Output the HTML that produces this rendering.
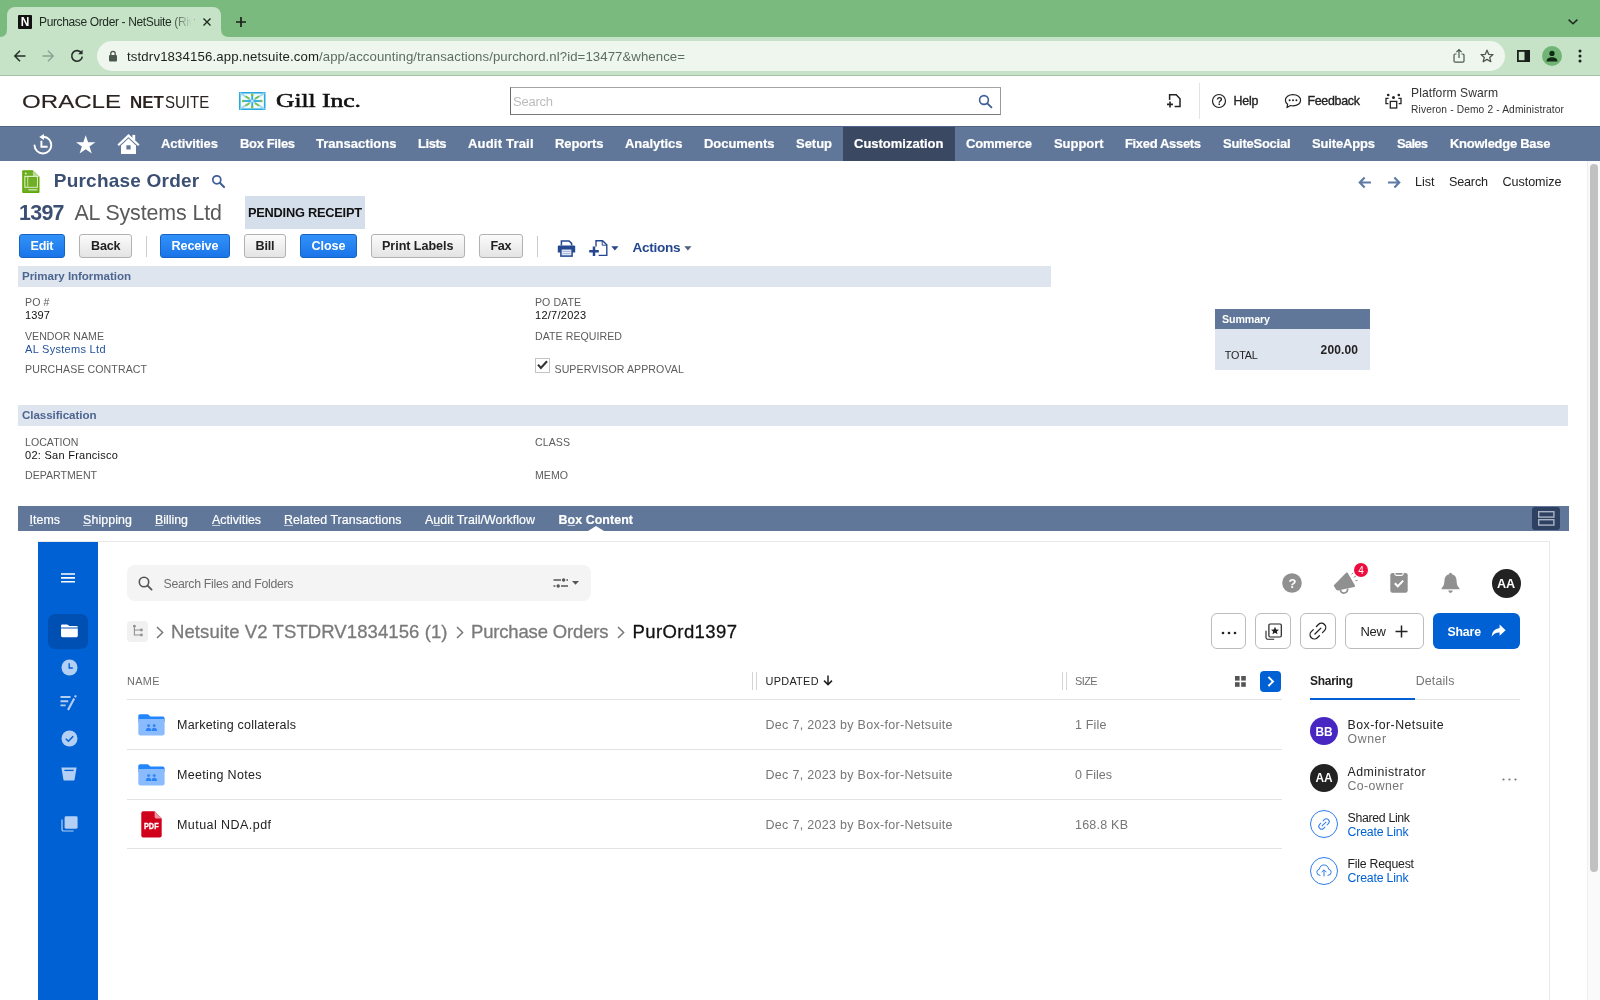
<!DOCTYPE html>
<html lang="en">
<head>
<meta charset="utf-8">
<title>Purchase Order - NetSuite (Riveron - Demo 2)</title>
<style>
*{box-sizing:border-box;margin:0;padding:0}
html,body{width:1600px;height:1000px;overflow:hidden;background:#fff}
body{position:relative;font-family:"Liberation Sans",sans-serif;font-size:12px;color:#222}
#root{position:absolute;left:0;top:0;width:1600px;height:1000px;will-change:transform}
.a{position:absolute;white-space:nowrap;line-height:1}
svg{position:absolute;overflow:visible}
#tabbar{left:0;top:0;width:1600px;height:37px;background:#7aba7e}
#tab{left:7px;top:7px;width:214px;height:30px;background:#c6e2c7;border-radius:8px 8px 0 0}
#toolbar{left:0;top:37px;width:1600px;height:39px;background:#c6e2c7;border-bottom:1px solid #a9bfaa}
#omni{left:97px;top:41px;width:1408px;height:30px;border-radius:15px;background:#eef6ee}
#nav{left:0;top:126px;width:1600px;height:35px;background:#607799}
#navsel{left:843px;top:126px;width:111.5px;height:35px;background:#3a4861}
.btn{top:234px;height:24px;border:1px solid #b2b2b2;border-radius:3px;background:linear-gradient(#fbfbfb,#e4e4e4)}
.btn.b{background:linear-gradient(#3292f8,#1a74e9);border-color:#1763c4}
.sec{height:21px;background:#dfe5ef}
.row{left:127px;width:1155px;height:1px;background:#e3e3e3}
.ib{top:613px;height:36px;border:1px solid #bcbcbc;border-radius:6px;background:#fff}
u{text-decoration-thickness:1px;text-underline-offset:0.5px;text-decoration-color:rgba(255,255,255,.65)}
</style>
</head>
<body>
<div id="root">
<!-- BROWSER CHROME -->
<div class="a" id="tabbar"></div>
<div class="a" id="tab"></div>
<svg style="left:0;top:29px" width="230" height="8"><path d="M0 8 Q7 8 7 0 L7 8Z M221 0 Q221 8 229 8 L221 8Z" fill="#c6e2c7"/></svg>
<div class="a" id="toolbar"></div>
<div class="a" id="omni"></div>
<div class="a" style="left:18px;top:15px;width:14px;height:14px;background:#111;border-radius:1px"></div>
<div class="a" style="left:170px;top:12px;width:24px;height:20px;background:linear-gradient(90deg,rgba(198,226,199,0),#c6e2c7 90%);z-index:3"></div>
<svg style="left:202px;top:17px" width="10" height="10"><path d="M1.5 1.5 L8.5 8.5 M8.5 1.5 L1.5 8.5" stroke="#1f2a20" stroke-width="1.4" fill="none"/></svg>
<svg style="left:235px;top:16px" width="12" height="12"><path d="M6 1 V11 M1 6 H11" stroke="#1a1f1a" stroke-width="1.7" fill="none"/></svg>
<svg style="left:1566px;top:18px" width="14" height="8"><path d="M2.6 1.6 L7 5.8 L11.4 1.6" stroke="#1f2a20" stroke-width="1.5" fill="none"/></svg>
<svg style="left:13px;top:49px" width="14" height="14"><path d="M12.5 7 H2 M7 1.8 L1.8 7 L7 12.2" stroke="#27302a" stroke-width="1.5" fill="none"/></svg>
<svg style="left:41px;top:49px" width="14" height="14"><path d="M1.5 7 H12 M7 1.8 L12.2 7 L7 12.2" stroke="#8ea392" stroke-width="1.5" fill="none"/></svg>
<svg style="left:69px;top:48px" width="16" height="16"><path d="M12.6 5.2 A5.3 5.3 0 1 0 13.3 8.6" stroke="#27302a" stroke-width="1.6" fill="none"/><path d="M13.6 1.8 V6.3 H9.1 Z" fill="#27302a"/></svg>
<svg style="left:108px;top:50px" width="10" height="12"><rect x="1" y="5" width="8" height="6.5" rx="1" fill="#4c584e"/><path d="M2.8 5.5 V3.6 A2.2 2.2 0 0 1 7.2 3.6 V5.5" stroke="#4c584e" stroke-width="1.3" fill="none"/></svg>
<svg style="left:1452px;top:48px" width="14" height="16"><path d="M4.5 6 H3.2 A1.2 1.2 0 0 0 2 7.2 V13 A1.2 1.2 0 0 0 3.2 14.2 H10.8 A1.2 1.2 0 0 0 12 13 V7.2 A1.2 1.2 0 0 0 10.8 6 H9.5 M7 10 V1.8 M4.4 4.2 L7 1.6 L9.6 4.2" stroke="#4c584e" stroke-width="1.2" fill="none"/></svg>
<svg style="left:1480px;top:49px" width="14" height="14"><path d="M7 1.2 L8.7 5.3 L13 5.6 L9.7 8.4 L10.8 12.7 L7 10.4 L3.2 12.7 L4.3 8.4 L1 5.6 L5.3 5.3 Z" stroke="#4c584e" stroke-width="1.3" fill="none" stroke-linejoin="round"/></svg>
<svg style="left:1517px;top:50px" width="13" height="12"><rect x="0.9" y="0.9" width="11.2" height="10.2" stroke="#1a1f1a" stroke-width="1.8" fill="none"/><rect x="7.5" y="1" width="4.6" height="10" fill="#1a1f1a"/></svg>
<div class="a" style="left:1542px;top:46px;width:20px;height:20px;border-radius:10px;background:#72b478"></div>
<svg style="left:1545px;top:49px" width="14" height="14"><circle cx="7" cy="4.4" r="2.6" fill="#0f2a14"/><path d="M1.5 12.6 C1.5 9.2 4.2 8.2 7 8.2 C9.8 8.2 12.5 9.2 12.5 12.6 Z" fill="#0f2a14"/></svg>
<svg style="left:1578px;top:49px" width="4" height="14"><circle cx="2" cy="2" r="1.5" fill="#1a1f1a"/><circle cx="2" cy="7" r="1.5" fill="#1a1f1a"/><circle cx="2" cy="12" r="1.5" fill="#1a1f1a"/></svg>
<!-- NETSUITE HEADER -->
<div class="a" id="nav"></div>
<div class="a" id="navsel"></div>
<svg style="left:238.7px;top:92px" width="26.5" height="18" viewBox="0 0 26.5 18"><rect x="0.8" y="0.8" width="24.9" height="16.4" fill="#f3fafd" stroke="#29a9e0" stroke-width="1.6"/><path d="M1 1 L25.5 17 M25.5 1 L1 17" stroke="#9bd4ef" stroke-width="1.6"/><path d="M4 9 H22.5" stroke="#29a9e0" stroke-width="1.8"/><path d="M13.2 2.6 V15.4" stroke="#29a9e0" stroke-width="1.8"/><circle cx="13.2" cy="9" r="1.5" fill="#bfe4f6"/><path d="M6.5 4.2 L10.5 6.8 M20 4.2 L16 6.8 M6.5 13.8 L10.5 11.2 M20 13.8 L16 11.2" stroke="#7ac143" stroke-width="1.7"/><circle cx="13.2" cy="2.9" r="1.3" fill="#7ac143"/><circle cx="13.2" cy="15.1" r="1.3" fill="#7ac143"/><circle cx="4.2" cy="9" r="1.3" fill="#7ac143"/><circle cx="22.3" cy="9" r="1.3" fill="#7ac143"/></svg>
<div class="a" style="left:510px;top:87px;width:491px;height:28px;border:1px solid #6a6a6a;border-top-color:#a4a4a4;border-right-color:#9a9a9a;border-bottom-color:#7a7a7a;background:#fff"></div>
<svg style="left:978px;top:94px" width="15" height="15" viewBox="0 0 15 15"><circle cx="6" cy="6" r="4.4" stroke="#3e5f9a" stroke-width="1.6" fill="none"/><path d="M9.3 9.3 L13.4 13.4" stroke="#3e5f9a" stroke-width="1.9" stroke-linecap="round"/></svg>

<svg style="left:1166px;top:93px" width="16" height="16" viewBox="0 0 16 16"><path d="M3.6 7 V1.8 H10.2 L14 5.8 V13.6 H8.6" stroke="#222" stroke-width="1.5" fill="none"/><path d="M1 11.4 H7 M4 8.4 V14.4" stroke="#222" stroke-width="1.6" fill="none"/></svg>
<div class="a" style="left:1199px;top:83px;width:1px;height:36px;background:#e3e3e3"></div>
<svg style="left:1211px;top:93px" width="16" height="16" viewBox="0 0 16 16"><circle cx="8" cy="8" r="6.5" stroke="#222" stroke-width="1.2" fill="none"/></svg>
<svg style="left:1284px;top:93px" width="18" height="16" viewBox="0 0 18 16"><path d="M9 1.6 C13.4 1.6 16.6 4 16.6 7.2 C16.6 10.4 13.4 12.8 9 12.8 C8.1 12.8 7.2 12.7 6.4 12.5 L3 14.6 L3.6 11.3 C2.2 10.3 1.4 8.8 1.4 7.2 C1.4 4 4.6 1.6 9 1.6 Z" stroke="#222" stroke-width="1.2" fill="none" stroke-linejoin="round"/><circle cx="5.6" cy="7.3" r="1" fill="#222"/><circle cx="9" cy="7.3" r="1" fill="#222"/><circle cx="12.4" cy="7.3" r="1" fill="#222"/></svg>
<svg style="left:1384px;top:92px" width="19" height="18" viewBox="0 0 19 18"><rect x="6.3" y="9.4" width="6.4" height="6.6" stroke="#222" stroke-width="1.3" fill="none"/><circle cx="9.5" cy="5.4" r="1.5" fill="#222"/><circle cx="4.2" cy="3" r="1.3" fill="#222"/><circle cx="14.8" cy="3" r="1.3" fill="#222"/><path d="M4.6 6.4 H2 V11.6 H4.4 M14.4 6.4 H17 V11.6 H14.6" stroke="#222" stroke-width="1.3" fill="none"/></svg>

<div class="a" style="left:0;top:126px;width:1600px;height:1px;background:#4f6486"></div>
<svg style="left:32px;top:132.5px" width="24" height="24" viewBox="0 0 24 24"><path d="M11.4 3.7 A8.4 8.4 0 1 1 2.5 12.4" stroke="#fff" stroke-width="1.9" fill="none" stroke-linecap="round"/><path d="M7.2 3.9 L12 1 V6.9 Z" fill="#fff"/><path d="M9.4 7.8 V13.7 H15.6" stroke="#fff" stroke-width="1.9" fill="none"/></svg>
<svg style="left:75px;top:133.5px" width="22" height="21" viewBox="0 0 22 21"><path d="M10.7 1.2 L13.1 8.2 L20.4 8.2 L14.5 12.5 L16.8 19.6 L10.7 15.3 L4.6 19.6 L6.9 12.5 L1 8.2 L8.3 8.2 Z" fill="#fff"/></svg>
<svg style="left:117px;top:133.5px" width="23" height="21" viewBox="0 0 23 21"><path d="M1.2 11.2 L11.5 1.6 L21.8 11.2" stroke="#fff" stroke-width="2.2" fill="none" stroke-linejoin="miter"/><path d="M4 11.4 L11.5 4.6 L19 11.4 V20 H4 Z" fill="#fff"/><rect x="15.4" y="0.9" width="2.8" height="5" fill="#fff"/><rect x="9.4" y="11.3" width="4.2" height="4.2" fill="#607799"/></svg>
<!--NAVICONS-->
<!-- PAGE -->
<svg style="left:22.3px;top:169.7px" width="17.7" height="23.3" viewBox="0 0 17.7 23.3"><path d="M1.2 0.3 H10.8 L17.5 6.8 V22 Q17.5 23.1 16.4 23.1 H1.2 Q0.2 23.1 0.2 22 V1.3 Q0.2 0.3 1.2 0.3Z" fill="#5ea900"/><path d="M1.5 1.6 H10.4 L16.2 7.4 V21.8 H1.5Z" fill="#70ad28"/><path d="M10.9 0.4 L17.5 6.9 H12 Q10.9 6.9 10.9 5.8Z" fill="#b9db94"/><rect x="2.9" y="6.4" width="12.5" height="10.8" fill="#5ea900" stroke="#e2f1cf" stroke-width="1.1"/><rect x="6.6" y="7.3" width="7.6" height="9" fill="#70ad28"/><rect x="4.9" y="7" width="1.5" height="9.6" fill="#b4d78c"/><path d="M6.5 19.8 H15.3" stroke="#dcefc8" stroke-width="1.1"/><rect x="2.9" y="2.7" width="1.6" height="1.6" fill="#eaf5dc"/></svg>
<svg style="left:211px;top:174px" width="15" height="15" viewBox="0 0 15 15"><circle cx="5.8" cy="5.8" r="4" stroke="#3e5f9a" stroke-width="1.7" fill="none"/><path d="M9 9 L13 13" stroke="#3e5f9a" stroke-width="2.2" stroke-linecap="round"/></svg>
<div class="a" style="left:245px;top:196px;width:120px;height:33px;background:#d5dfec"></div>
<div class="a btn b" style="left:19px;width:46px"></div>
<div class="a btn" style="left:79px;width:53px"></div>
<div class="a" style="left:146px;top:236px;width:1px;height:21px;background:#ccc"></div>
<div class="a btn b" style="left:160px;width:70px"></div>
<div class="a btn" style="left:244px;width:42px"></div>
<div class="a btn b" style="left:300px;width:57px"></div>
<div class="a btn" style="left:370.5px;width:94.5px"></div>
<div class="a btn" style="left:479px;width:44px"></div>
<div class="a" style="left:537px;top:236px;width:1px;height:21px;background:#ccc"></div>
<svg style="left:557px;top:240px" width="19" height="17" viewBox="0 0 19 17"><path d="M4.4 5.6 V1 H12 L14.6 3.4 V5.6" stroke="#24478f" stroke-width="1.5" fill="#fff"/><path d="M0.8 6.6 Q0.8 5.4 2 5.4 H17 Q18.2 5.4 18.2 6.6 V12.4 H0.8Z" fill="#24478f"/><rect x="3.9" y="8.8" width="11.2" height="7.3" fill="#e6ebf6" stroke="#24478f" stroke-width="1.5"/><path d="M5.4 11.4 H13.6 M5.4 13.6 H13.6" stroke="#9fb0d6" stroke-width="0.9"/></svg>
<svg style="left:589px;top:239px" width="19" height="18" viewBox="0 0 19 18"><path d="M7 7.4 V1.8 H13.6 L17.8 5.8 V16.4 H9.6" stroke="#24478f" stroke-width="1.4" fill="none"/><path d="M13.2 2 V6.2 H17.6" stroke="#24478f" stroke-width="1" fill="none"/><path d="M0.2 12.2 H9.8 M5 7.4 V17" stroke="#24478f" stroke-width="2.5" fill="none"/></svg>
<svg style="left:611px;top:246px" width="8" height="5"><path d="M0.3 0.3 H7.5 L3.9 4.6Z" fill="#24478f"/></svg>
<svg style="left:684px;top:246px" width="8" height="5"><path d="M0.3 0.3 H7.5 L3.9 4.6Z" fill="#4f5f80"/></svg>
<div class="a sec" style="left:18px;top:266px;width:1033px"></div>
<div class="a sec" style="left:18px;top:405px;width:1550px"></div>
<div class="a" style="left:535px;top:358px;width:15px;height:15px;border:1px solid #c4c4c4;background:#fff"></div>
<svg style="left:537px;top:360px" width="11" height="10" viewBox="0 0 11 10"><path d="M1 4.6 L3.9 8 L10 1.2" stroke="#333" stroke-width="2.1" fill="none"/></svg>
<div class="a" style="left:1215px;top:309px;width:155px;height:20px;background:#607799"></div>
<div class="a" style="left:1215px;top:329px;width:155px;height:41px;background:#dfe5ef"></div>
<svg style="left:1357.5px;top:175.5px" width="14" height="13" viewBox="0 0 14 13"><path d="M13 6.5 H2.4 M6.6 1.6 L1.8 6.5 L6.6 11.4" stroke="#5f7ba5" stroke-width="2.2" fill="none"/></svg>
<svg style="left:1386.5px;top:175.5px" width="14" height="13" viewBox="0 0 14 13"><path d="M1 6.5 H11.6 M7.4 1.6 L12.2 6.5 L7.4 11.4" stroke="#5f7ba5" stroke-width="2.2" fill="none"/></svg>
<div class="a" style="left:18px;top:506px;width:1550.7px;height:25px;background:#607799"></div>
<svg style="left:588px;top:526px" width="16" height="5"><path d="M0 5 L8 0 L16 5Z" fill="#fff"/></svg>
<div class="a" style="left:1532px;top:507px;width:28px;height:23px;background:#2f4162;border-radius:3px"></div>
<svg style="left:1538px;top:511px" width="17" height="15" viewBox="0 0 17 15"><rect x="0.7" y="0.7" width="15.2" height="5.4" stroke="#aab3c2" stroke-width="1.4" fill="none"/><rect x="0.7" y="8.7" width="15.2" height="5.4" stroke="#aab3c2" stroke-width="1.4" fill="none"/></svg>
<div class="a" style="left:1587px;top:161px;width:13px;height:839px;background:#fafafa;border-left:1px solid #efefef"></div>
<div class="a" style="left:1590px;top:164px;width:7.5px;height:708px;background:#c1c1c1;border-radius:4px"></div>

<!-- BOX -->
<div class="a" style="left:38px;top:541px;width:1512px;height:470px;border:1px solid #e8e8e8;background:#fff"></div>
<div class="a" style="left:38px;top:542px;width:60px;height:458px;background:#0061d5"></div>
<svg style="left:61px;top:573px" width="14" height="10"><path d="M0 1 H14 M0 4.9 H14 M0 8.8 H14" stroke="#fff" stroke-width="1.6"/></svg>
<div class="a" style="left:48px;top:613.5px;width:39.5px;height:35.5px;border-radius:7px;background:#0050b3"></div>
<svg style="left:60.5px;top:623.5px" width="17" height="13.5" viewBox="0 0 17 13.5"><path d="M0 1.6 Q0 0.4 1.2 0.4 H6 Q6.8 0.4 7.3 1 L8 1.9 H15.6 Q16.8 1.9 16.8 3.1 V3.6 H0Z" fill="#fff"/><path d="M0 4.6 H16.8 V11.8 Q16.8 13.2 15.4 13.2 H1.4 Q0 13.2 0 11.8Z" fill="#fff"/></svg>
<svg style="left:60.5px;top:658.5px" width="17" height="17" viewBox="0 0 17 17"><circle cx="8.5" cy="8.5" r="8" fill="#b3cff3"/><path d="M8.2 4.2 V9 H11.8" stroke="#0061d5" stroke-width="1.4" fill="none"/></svg>
<svg style="left:60px;top:694px" width="18" height="17" viewBox="0 0 18 17"><path d="M0.5 3 H10.5 M0.5 7.2 H8.2 M0.5 11.4 H5.6" stroke="#b3cff3" stroke-width="1.9"/><path d="M8 16 L14.2 4.6" stroke="#b3cff3" stroke-width="2.1"/><path d="M15 3.2 L15.9 1.4" stroke="#b3cff3" stroke-width="2.1"/></svg>
<svg style="left:60.5px;top:730px" width="17" height="17" viewBox="0 0 17 17"><circle cx="8.5" cy="8.5" r="8" fill="#b3cff3"/><path d="M4.8 8.8 L7.4 11.2 L12.2 6.2" stroke="#0061d5" stroke-width="1.5" fill="none"/></svg>
<svg style="left:61px;top:767px" width="16" height="14" viewBox="0 0 16 14"><path d="M0.4 0.4 H15.6 L13.6 12.4 Q13.4 13.6 12.2 13.6 H3.8 Q2.6 13.6 2.4 12.4Z" fill="#b3cff3"/><path d="M3.4 3.4 H12.6" stroke="#0061d5" stroke-width="1.3"/></svg>
<svg style="left:60.5px;top:816px" width="17" height="16" viewBox="0 0 17 16"><rect x="3.6" y="0.3" width="13" height="12.4" rx="1.4" fill="#b3cff3"/><path d="M1 3.6 V13.4 Q1 15 2.6 15 H12.6" stroke="#b3cff3" stroke-width="1.2" fill="none"/></svg>
<div class="a" style="left:127px;top:565px;width:464px;height:36px;border-radius:8px;background:#f4f4f4"></div>
<svg style="left:138px;top:576px" width="15" height="15" viewBox="0 0 15 15"><circle cx="6" cy="6" r="4.7" stroke="#555" stroke-width="1.6" fill="none"/><path d="M9.6 9.6 L13.6 13.6" stroke="#555" stroke-width="1.8" stroke-linecap="round"/></svg>
<svg style="left:553px;top:577px" width="16" height="12" viewBox="0 0 16 12"><path d="M0.5 3 H8 M13.4 3 H15 M0.5 9 H2.4 M8 9 H15" stroke="#555" stroke-width="1.5"/><circle cx="10.6" cy="3" r="1.7" fill="#555"/><circle cx="5.2" cy="9" r="1.7" fill="#555"/></svg>
<svg style="left:572px;top:581px" width="7" height="4"><path d="M0 0 H7 L3.5 3.8Z" fill="#555"/></svg>
<!-- box top icons -->
<svg style="left:1282px;top:573px" width="20" height="20" viewBox="0 0 20 20"><circle cx="10" cy="10" r="9.8" fill="#909090"/></svg>
<svg style="left:1332px;top:571px" width="28" height="24" viewBox="0 0 28 24"><path d="M1.6 14.6 L14.4 1.6 Q15.2 1 15.8 2 L23 14.4 Q23.4 15.6 22.2 16 L6 19.4 Q4.6 19.6 4 18.6 Z" fill="#909090"/><path d="M8.4 19 Q8.8 22.4 12.4 22 Q15.8 21.4 15.6 17.6" stroke="#909090" stroke-width="1.7" fill="none"/><path d="M19.6 3.4 L21.2 1.8 M21.8 6.4 L24 5 M23.4 9.8 L25.6 9.4" stroke="#909090" stroke-width="1"/></svg>
<div class="a" style="left:1354px;top:562.5px;width:14px;height:14px;border-radius:7px;background:#ed0c3e"></div>
<svg style="left:1390px;top:572px" width="18" height="21" viewBox="0 0 18 21"><rect x="0.3" y="1" width="17.4" height="19.8" rx="2.2" fill="#909090"/><path d="M4.8 1 V1.6 Q4.8 3.4 6.6 3.4 H11.4 Q13.2 3.4 13.2 1.6 V1" stroke="#fff" stroke-width="1.2" fill="none"/><path d="M4.8 11.2 L7.8 14.2 L13.2 8.6" stroke="#fff" stroke-width="2" fill="none"/></svg>
<svg style="left:1441px;top:572px" width="19" height="22" viewBox="0 0 19 22"><path d="M9.5 0.8 Q10.8 0.8 10.9 2.2 Q15.6 3.4 15.6 9 Q15.6 14 18.4 16 V17.2 H0.6 V16 Q3.4 14 3.4 9 Q3.4 3.4 8.1 2.2 Q8.2 0.8 9.5 0.8Z" fill="#909090"/><path d="M7.2 18.6 H11.8 Q11.2 21 9.5 21 Q7.8 21 7.2 18.6Z" fill="#909090"/></svg>
<div class="a" style="left:1491.5px;top:568.5px;width:29px;height:29px;border-radius:15px;background:#222"></div>
<!-- breadcrumb -->
<div class="a" style="left:127px;top:620.5px;width:21px;height:21px;border-radius:4px;background:#f1f1f1"></div>
<svg style="left:132px;top:624px" width="12" height="14" viewBox="0 0 12 14"><path d="M2.4 3.2 V11 H8.6 M2.4 6 H8.6" stroke="#909090" stroke-width="1.1" fill="none"/><circle cx="2.4" cy="2.2" r="1.4" fill="#909090"/><circle cx="9.4" cy="6" r="1.4" fill="#909090"/><circle cx="9.4" cy="11" r="1.4" fill="#909090"/></svg>
<svg style="left:155.5px;top:626px" width="8" height="13"><path d="M1 1 L6.6 6.5 L1 12" stroke="#767676" stroke-width="1.5" fill="none"/></svg>
<svg style="left:456px;top:626px" width="8" height="13"><path d="M1 1 L6.6 6.5 L1 12" stroke="#767676" stroke-width="1.5" fill="none"/></svg>
<svg style="left:617px;top:626px" width="8" height="13"><path d="M1 1 L6.6 6.5 L1 12" stroke="#767676" stroke-width="1.5" fill="none"/></svg>
<!-- action buttons -->
<div class="a ib" style="left:1211px;width:35px"></div>
<svg style="left:1221px;top:631px" width="16" height="4"><circle cx="2" cy="2" r="1.3" fill="#222"/><circle cx="8" cy="2" r="1.3" fill="#222"/><circle cx="14" cy="2" r="1.3" fill="#222"/></svg>
<div class="a ib" style="left:1255px;width:36px"></div>
<svg style="left:1264.5px;top:622.5px" width="17" height="17" viewBox="0 0 17 17"><rect x="3.9" y="1" width="12.4" height="13" rx="1.2" stroke="#222" stroke-width="1.2" fill="none"/><path d="M1 7.8 V14.4 Q1 16.2 2.8 16.2 H9.2" stroke="#222" stroke-width="1.1" fill="none"/><path d="M10 3.8 L11.2 6.4 L14 6.7 L11.9 8.5 L12.5 11.3 L10 9.8 L7.5 11.3 L8.1 8.5 L6 6.7 L8.8 6.4Z" fill="#222"/></svg>
<div class="a ib" style="left:1300px;width:36px"></div>
<svg style="left:1300px;top:613px" width="36" height="36" viewBox="0 0 36 36"><g transform="translate(17.9,18.1) rotate(-45)" stroke="#222" stroke-width="1.3" fill="none" stroke-linecap="round"><path d="M2.2 -4.3 H5 A4.3 4.3 0 0 1 5 4.3 H2.2 M-2.2 4.3 H-5 A4.3 4.3 0 0 1 -5 -4.3 H-2.2 M-4.2 0 H4.2"/></g></svg>
<div class="a ib" style="left:1344.5px;width:79px"></div>
<svg style="left:1395px;top:625px" width="13" height="13"><path d="M6.5 0.5 V12.5 M0.5 6.5 H12.5" stroke="#222" stroke-width="1.5"/></svg>
<div class="a" style="left:1432.5px;top:613px;width:87.5px;height:36px;border-radius:6px;background:#0061d5"></div>
<svg style="left:1491px;top:624px" width="15" height="14" viewBox="0 0 15 14"><path d="M8.6 0.6 L14.6 6.2 L8.6 11.8 V8.4 Q3.4 8.2 0.6 12.8 Q1 5 8.6 4Z" fill="#fff"/></svg>
<!-- list header -->
<div class="a" style="left:752px;top:672px;width:1px;height:18px;background:#d4d4d4"></div>
<div class="a" style="left:755.5px;top:672px;width:1px;height:18px;background:#d4d4d4"></div>
<div class="a" style="left:1062px;top:672px;width:1px;height:18px;background:#d4d4d4"></div>
<div class="a" style="left:1065.5px;top:672px;width:1px;height:18px;background:#d4d4d4"></div>
<svg style="left:823px;top:675px" width="10" height="11"><path d="M5 0.5 V9.2 M1 5.6 L5 9.6 L9 5.6" stroke="#222" stroke-width="1.5" fill="none"/></svg>
<svg style="left:1234.5px;top:675.5px" width="11" height="11"><rect x="0" y="0" width="4.6" height="4.6" fill="#555"/><rect x="6.2" y="0" width="4.6" height="4.6" fill="#555"/><rect x="0" y="6.2" width="4.6" height="4.6" fill="#555"/><rect x="6.2" y="6.2" width="4.6" height="4.6" fill="#555"/></svg>
<div class="a" style="left:1260px;top:671px;width:21px;height:21px;border-radius:4px;background:#0061d5"></div>
<svg style="left:1267px;top:676px" width="8" height="11"><path d="M1.4 1 L6 5.5 L1.4 10" stroke="#fff" stroke-width="1.9" fill="none"/></svg>
<div class="a row" style="top:699px"></div>
<div class="a row" style="top:749px"></div>
<div class="a row" style="top:799px"></div>
<div class="a row" style="top:848px"></div>
<div class="a" style="left:1310px;top:699px;width:210px;height:1px;background:#e3e3e3"></div>
<div class="a" style="left:1310px;top:698px;width:105px;height:2px;background:#0061d5"></div>
<svg style="left:138.2px;top:713.5px" width="27" height="22" viewBox="0 0 27 22"><path d="M0.3 2 Q0.3 0.3 2 0.3 H9.2 Q10.2 0.3 10.9 1 L12.3 2.6 H24.8 Q26.6 2.6 26.6 4.4 V8 H0.3Z" fill="#2486fc"/><path d="M0.3 6 Q0.3 5 1.3 5 H25.6 Q26.6 5 26.6 6 V19.6 Q26.6 21.4 24.8 21.4 H2.1 Q0.3 21.4 0.3 19.6Z" fill="#8abbfd"/><circle cx="10.6" cy="11.6" r="1.45" fill="#2b83f6"/><circle cx="16.2" cy="11.6" r="1.45" fill="#2b83f6"/><path d="M7.8 17 Q7.8 13.8 10.6 13.8 Q13.2 13.8 13.2 17Z M13.6 17 Q13.6 13.8 16.2 13.8 Q19 13.8 19 17Z" fill="#2b83f6"/></svg>
<svg style="left:138.2px;top:763.5px" width="27" height="22" viewBox="0 0 27 22"><path d="M0.3 2 Q0.3 0.3 2 0.3 H9.2 Q10.2 0.3 10.9 1 L12.3 2.6 H24.8 Q26.6 2.6 26.6 4.4 V8 H0.3Z" fill="#2486fc"/><path d="M0.3 6 Q0.3 5 1.3 5 H25.6 Q26.6 5 26.6 6 V19.6 Q26.6 21.4 24.8 21.4 H2.1 Q0.3 21.4 0.3 19.6Z" fill="#8abbfd"/><circle cx="10.6" cy="11.6" r="1.45" fill="#2b83f6"/><circle cx="16.2" cy="11.6" r="1.45" fill="#2b83f6"/><path d="M7.8 17 Q7.8 13.8 10.6 13.8 Q13.2 13.8 13.2 17Z M13.6 17 Q13.6 13.8 16.2 13.8 Q19 13.8 19 17Z" fill="#2b83f6"/></svg>
<svg style="left:141px;top:810.5px" width="21" height="27" viewBox="0 0 21 27"><path d="M2.2 0.3 H13.6 L20.7 7.4 V24.6 Q20.7 26.6 18.7 26.6 H2.2 Q0.3 26.6 0.3 24.6 V2.2 Q0.3 0.3 2.2 0.3Z" fill="#d0021b"/><path d="M13.6 0.3 L20.7 7.4 H15.2 Q13.6 7.4 13.6 5.8Z" fill="#f0949f"/></svg>

<div class="a" style="left:1310px;top:717px;width:28px;height:28px;border-radius:14px;background:#4826c2"></div>
<div class="a" style="left:1310px;top:763.5px;width:28px;height:28px;border-radius:14px;background:#222"></div>
<div class="a" style="left:1310px;top:810px;width:28px;height:28px;border-radius:14px;border:1px solid #2f7de9;background:#fff"></div>
<div class="a" style="left:1310px;top:856.5px;width:28px;height:28px;border-radius:14px;border:1px solid #2f7de9;background:#fff"></div>
<svg style="left:1310px;top:810px" width="28" height="28" viewBox="0 0 28 28"><g transform="translate(14,14) rotate(-45) scale(0.66)" stroke="#2f7de9" stroke-width="1.5" fill="none" stroke-linecap="round"><path d="M2.2 -4.3 H5 A4.3 4.3 0 0 1 5 4.3 H2.2 M-2.2 4.3 H-5 A4.3 4.3 0 0 1 -5 -4.3 H-2.2 M-4.2 0 H4.2"/></g></svg>
<svg style="left:1316px;top:864px" width="16" height="13" viewBox="0 0 16 13"><path d="M4.4 11.4 Q0.8 11.4 0.8 8.2 Q0.8 5.6 3.4 5.2 Q4 1 8 1 Q12 1 12.6 5.2 Q15.2 5.6 15.2 8.2 Q15.2 11.4 11.6 11.4" stroke="#2f7de9" stroke-width="1" fill="none"/><path d="M8 12.4 V6 M5.6 8.2 L8 5.8 L10.4 8.2" stroke="#2f7de9" stroke-width="1" fill="none"/></svg>
<svg style="left:1502px;top:778px" width="15" height="3"><circle cx="1.5" cy="1.5" r="1.1" fill="#767676"/><circle cx="7.5" cy="1.5" r="1.1" fill="#767676"/><circle cx="13.5" cy="1.5" r="1.1" fill="#767676"/></svg>



<!-- TEXT -->
<span class="a" style="left:20.7px;top:17.01px;font-size:11.9px;color:#fff;font-weight:700;letter-spacing:0.006px;">N</span>
<span class="a" style="left:39px;top:16.01px;font-size:12px;color:#1f2a20;letter-spacing:-0.364px;">Purchase Order - NetSuite (Riv</span>
<span class="a" style="left:127px;top:50.02px;font-size:13.2px;color:#1b211c;letter-spacing:0.149px;">tstdrv1834156.app.netsuite.com</span>
<span class="a" style="left:319px;top:50.02px;font-size:13.2px;color:#5f6d61;letter-spacing:0.081px;">/app/accounting/transactions/purchord.nl?id=13477&amp;whence=</span>
<span class="a" style="left:21.5px;top:94.00px;font-size:17.6px;color:#2a2320;transform:scaleX(1.3696);transform-origin:0 0;-webkit-text-stroke:0.12px #2a2320;">ORACLE</span>
<span class="a" style="left:129.7px;top:94.00px;font-size:16.4px;color:#2a2320;font-weight:700;transform:scaleX(1.0336);transform-origin:0 0;">NET</span>
<span class="a" style="left:164.6px;top:94.00px;font-size:16.4px;color:#2a2320;transform:scaleX(0.9155);transform-origin:0 0;">SUITE</span>
<span class="a" style="left:276.4px;top:92.01px;font-size:18.5px;color:#111;font-family:'Liberation Serif',serif;transform:scaleX(1.3770);transform-origin:0 0;-webkit-text-stroke:0.55px #111;">Gill Inc.</span>
<span class="a" style="left:513px;top:95.00px;font-size:13px;color:#bcbcbc;letter-spacing:-0.241px;">Search</span>
<span class="a" style="left:1233.4px;top:95.00px;font-size:12.4px;color:#222;letter-spacing:-0.128px;-webkit-text-stroke:0.35px #222;">Help</span>
<span class="a" style="left:1307.4px;top:95.00px;font-size:12.4px;color:#222;letter-spacing:-0.275px;-webkit-text-stroke:0.35px #222;">Feedback</span>
<span class="a" style="left:1411px;top:87.02px;font-size:12.1px;color:#333;letter-spacing:0.076px;">Platform Swarm</span>
<span class="a" style="left:1411px;top:105.01px;font-size:10.2px;color:#333;letter-spacing:0.150px;">Riveron - Demo 2 - Administrator</span>
<span class="a" style="left:161px;top:137.01px;font-size:13px;color:#fff;font-weight:700;letter-spacing:-0.090px;-webkit-text-stroke:0.2px #fff;">Activities</span>
<span class="a" style="left:240px;top:137.01px;font-size:13px;color:#fff;font-weight:700;letter-spacing:-0.350px;-webkit-text-stroke:0.2px #fff;">Box Files</span>
<span class="a" style="left:316px;top:137.01px;font-size:13px;color:#fff;font-weight:700;letter-spacing:0.027px;-webkit-text-stroke:0.2px #fff;">Transactions</span>
<span class="a" style="left:418px;top:137.01px;font-size:13px;color:#fff;font-weight:700;letter-spacing:-0.461px;-webkit-text-stroke:0.2px #fff;">Lists</span>
<span class="a" style="left:468px;top:137.01px;font-size:13px;color:#fff;font-weight:700;letter-spacing:0.194px;-webkit-text-stroke:0.2px #fff;">Audit Trail</span>
<span class="a" style="left:555px;top:137.01px;font-size:13px;color:#fff;font-weight:700;letter-spacing:-0.104px;-webkit-text-stroke:0.2px #fff;">Reports</span>
<span class="a" style="left:625px;top:137.01px;font-size:13px;color:#fff;font-weight:700;letter-spacing:-0.039px;-webkit-text-stroke:0.2px #fff;">Analytics</span>
<span class="a" style="left:704px;top:137.01px;font-size:13px;color:#fff;font-weight:700;letter-spacing:-0.037px;-webkit-text-stroke:0.2px #fff;">Documents</span>
<span class="a" style="left:796px;top:137.01px;font-size:13px;color:#fff;font-weight:700;letter-spacing:-0.031px;-webkit-text-stroke:0.2px #fff;">Setup</span>
<span class="a" style="left:854px;top:137.01px;font-size:13px;color:#fff;font-weight:700;letter-spacing:-0.005px;-webkit-text-stroke:0.2px #fff;">Customization</span>
<span class="a" style="left:966px;top:137.01px;font-size:13px;color:#fff;font-weight:700;letter-spacing:-0.172px;-webkit-text-stroke:0.2px #fff;">Commerce</span>
<span class="a" style="left:1054px;top:137.01px;font-size:13px;color:#fff;font-weight:700;letter-spacing:-0.055px;-webkit-text-stroke:0.2px #fff;">Support</span>
<span class="a" style="left:1125px;top:137.01px;font-size:13px;color:#fff;font-weight:700;letter-spacing:-0.339px;-webkit-text-stroke:0.2px #fff;">Fixed Assets</span>
<span class="a" style="left:1223px;top:137.01px;font-size:13px;color:#fff;font-weight:700;letter-spacing:-0.258px;-webkit-text-stroke:0.2px #fff;">SuiteSocial</span>
<span class="a" style="left:1312px;top:137.01px;font-size:13px;color:#fff;font-weight:700;letter-spacing:-0.162px;-webkit-text-stroke:0.2px #fff;">SuiteApps</span>
<span class="a" style="left:1397px;top:137.01px;font-size:13px;color:#fff;font-weight:700;letter-spacing:-0.746px;-webkit-text-stroke:0.2px #fff;">Sales</span>
<span class="a" style="left:1450px;top:137.01px;font-size:13px;color:#fff;font-weight:700;letter-spacing:-0.272px;-webkit-text-stroke:0.2px #fff;">Knowledge Base</span>
<span class="a" style="left:1216.2px;top:96.01px;font-size:10.5px;color:#222;font-weight:700;">?</span>
<span class="a" style="left:53.8px;top:171.01px;font-size:19px;color:#3b4f72;font-weight:700;letter-spacing:0.217px;">Purchase Order</span>
<span class="a" style="left:19.1px;top:203.00px;font-size:21.4px;color:#3b4f72;font-weight:700;letter-spacing:-0.731px;">1397</span>
<span class="a" style="left:74.4px;top:203.00px;font-size:21.4px;color:#5a5a5a;letter-spacing:-0.109px;">AL Systems Ltd</span>
<span class="a" style="left:248px;top:207.01px;font-size:12.8px;color:#111;font-weight:700;letter-spacing:-0.238px;">PENDING RECEIPT</span>
<span class="a" style="left:30.5px;top:240.01px;font-size:12.6px;color:#fff;font-weight:700;letter-spacing:-0.266px;">Edit</span>
<span class="a" style="left:91px;top:240.01px;font-size:12.6px;color:#222;font-weight:700;letter-spacing:-0.203px;">Back</span>
<span class="a" style="left:171.5px;top:240.01px;font-size:12.6px;color:#fff;font-weight:700;letter-spacing:-0.104px;">Receive</span>
<span class="a" style="left:255.5px;top:240.01px;font-size:12.6px;color:#222;font-weight:700;letter-spacing:-0.198px;">Bill</span>
<span class="a" style="left:311.5px;top:240.01px;font-size:12.6px;color:#fff;font-weight:700;letter-spacing:-0.074px;">Close</span>
<span class="a" style="left:382px;top:240.01px;font-size:12.6px;color:#222;font-weight:700;letter-spacing:-0.054px;">Print Labels</span>
<span class="a" style="left:490.5px;top:240.01px;font-size:12.6px;color:#222;font-weight:700;letter-spacing:-0.352px;">Fax</span>
<span class="a" style="left:632.5px;top:241.01px;font-size:13.6px;color:#24478f;font-weight:700;letter-spacing:-0.310px;">Actions</span>
<span class="a" style="left:1415px;top:176.01px;font-size:12.6px;color:#222;letter-spacing:-0.036px;">List</span>
<span class="a" style="left:1449px;top:176.01px;font-size:12.6px;color:#222;letter-spacing:-0.181px;">Search</span>
<span class="a" style="left:1502.5px;top:176.01px;font-size:12.6px;color:#222;letter-spacing:-0.062px;">Customize</span>
<span class="a" style="left:22px;top:270.01px;font-size:11.6px;color:#4d6690;font-weight:700;letter-spacing:-0.065px;">Primary Information</span>
<span class="a" style="left:22px;top:409.00px;font-size:11.6px;color:#4d6690;font-weight:700;letter-spacing:-0.069px;">Classification</span>
<span class="a" style="left:25px;top:297.02px;font-size:10.6px;color:#5c5c5c;letter-spacing:0.115px;">PO #</span>
<span class="a" style="left:25px;top:310.01px;font-size:11px;color:#111;letter-spacing:0.172px;">1397</span>
<span class="a" style="left:25px;top:331.01px;font-size:10.6px;color:#5c5c5c;letter-spacing:0.013px;">VENDOR NAME</span>
<span class="a" style="left:25px;top:344.01px;font-size:11px;color:#24529c;letter-spacing:0.298px;">AL Systems Ltd</span>
<span class="a" style="left:25px;top:364.02px;font-size:10.6px;color:#5c5c5c;letter-spacing:0.083px;">PURCHASE CONTRACT</span>
<span class="a" style="left:535px;top:297.02px;font-size:10.6px;color:#5c5c5c;letter-spacing:0.047px;">PO DATE</span>
<span class="a" style="left:535px;top:310.01px;font-size:11px;color:#111;letter-spacing:0.258px;">12/7/2023</span>
<span class="a" style="left:535px;top:331.01px;font-size:10.6px;color:#5c5c5c;letter-spacing:0.056px;">DATE REQUIRED</span>
<span class="a" style="left:554.5px;top:364.02px;font-size:10.6px;color:#5c5c5c;letter-spacing:0.074px;">SUPERVISOR APPROVAL</span>
<span class="a" style="left:25px;top:437.01px;font-size:10.6px;color:#5c5c5c;letter-spacing:0.018px;">LOCATION</span>
<span class="a" style="left:25px;top:450.01px;font-size:11px;color:#111;letter-spacing:0.271px;">02: San Francisco</span>
<span class="a" style="left:25px;top:470.00px;font-size:10.6px;color:#5c5c5c;">DEPARTMENT</span>
<span class="a" style="left:535px;top:437.01px;font-size:10.6px;color:#5c5c5c;letter-spacing:0.062px;">CLASS</span>
<span class="a" style="left:535px;top:470.00px;font-size:10.6px;color:#5c5c5c;letter-spacing:0.010px;">MEMO</span>
<span class="a" style="left:1222px;top:314.00px;font-size:10.7px;color:#fff;font-weight:700;letter-spacing:-0.120px;">Summary</span>
<span class="a" style="left:1224.8px;top:350.01px;font-size:10.8px;color:#222;letter-spacing:-0.203px;">TOTAL</span>
<span class="a" style="left:1320.6px;top:344.00px;font-size:12px;color:#222;font-weight:700;letter-spacing:0.139px;">200.00</span>
<span class="a" style="left:29.5px;top:514.01px;font-size:12.4px;color:#fff;letter-spacing:0.047px;-webkit-text-stroke:0.2px #fff;"><u>I</u>tems</span>
<span class="a" style="left:83px;top:514.01px;font-size:12.4px;color:#fff;letter-spacing:0.109px;-webkit-text-stroke:0.2px #fff;"><u>S</u>hipping</span>
<span class="a" style="left:155px;top:514.01px;font-size:12.4px;color:#fff;letter-spacing:-0.010px;-webkit-text-stroke:0.2px #fff;"><u>B</u>illing</span>
<span class="a" style="left:212px;top:514.01px;font-size:12.4px;color:#fff;letter-spacing:0.012px;-webkit-text-stroke:0.2px #fff;"><u>A</u>ctivities</span>
<span class="a" style="left:284px;top:514.01px;font-size:12.4px;color:#fff;letter-spacing:0.058px;-webkit-text-stroke:0.2px #fff;"><u>R</u>elated Transactions</span>
<span class="a" style="left:425px;top:514.01px;font-size:12.4px;color:#fff;letter-spacing:0.038px;-webkit-text-stroke:0.2px #fff;">A<u>u</u>dit Trail/Workflow</span>
<span class="a" style="left:558.5px;top:514.01px;font-size:12.4px;color:#fff;font-weight:700;letter-spacing:0.083px;-webkit-text-stroke:0.2px #fff;">B<u>o</u>x Content</span>
<span class="a" style="left:163.5px;top:578.02px;font-size:12.3px;color:#6f6f6f;letter-spacing:-0.291px;">Search Files and Folders</span>
<span class="a" style="left:1288.6px;top:577.00px;font-size:13px;color:#fff;font-weight:700;">?</span>
<span class="a" style="left:1358.2px;top:566.01px;font-size:10px;color:#fff;">4</span>
<span class="a" style="left:1497px;top:578.01px;font-size:12.6px;color:#fff;font-weight:700;letter-spacing:-0.203px;">AA</span>
<span class="a" style="left:171px;top:623.01px;font-size:18.5px;color:#7a7a7a;letter-spacing:0.093px;-webkit-text-stroke:0.3px #7a7a7a;">Netsuite V2 TSTDRV1834156 (1)</span>
<span class="a" style="left:471px;top:623.01px;font-size:18.5px;color:#7a7a7a;letter-spacing:-0.167px;-webkit-text-stroke:0.3px #7a7a7a;">Purchase Orders</span>
<span class="a" style="left:632.5px;top:623.01px;font-size:18.5px;color:#111;letter-spacing:0.411px;-webkit-text-stroke:0.3px #111;">PurOrd1397</span>
<span class="a" style="left:1360.4px;top:625.00px;font-size:13px;color:#222;letter-spacing:-0.208px;">New</span>
<span class="a" style="left:1447.5px;top:626.02px;font-size:12.3px;color:#fff;font-weight:700;letter-spacing:-0.172px;">Share</span>
<span class="a" style="left:127px;top:676.01px;font-size:10.9px;color:#6f6f6f;letter-spacing:0.344px;">NAME</span>
<span class="a" style="left:765.5px;top:676.01px;font-size:10.9px;color:#222;letter-spacing:0.294px;">UPDATED</span>
<span class="a" style="left:1075px;top:676.01px;font-size:10.9px;color:#6f6f6f;letter-spacing:-0.573px;">SIZE</span>
<span class="a" style="left:1310px;top:675.00px;font-size:12px;color:#222;font-weight:700;letter-spacing:-0.279px;">Sharing</span>
<span class="a" style="left:1415.7px;top:675.00px;font-size:12.4px;color:#767676;letter-spacing:0.138px;">Details</span>
<span class="a" style="left:177px;top:719.01px;font-size:12.5px;color:#222;letter-spacing:0.218px;">Marketing collaterals</span>
<span class="a" style="left:765.5px;top:719.01px;font-size:12.5px;color:#767676;letter-spacing:0.304px;">Dec 7, 2023 by Box-for-Netsuite</span>
<span class="a" style="left:1075px;top:719.01px;font-size:12.5px;color:#767676;letter-spacing:0.184px;">1 File</span>
<span class="a" style="left:177px;top:769.01px;font-size:12.5px;color:#222;letter-spacing:0.324px;">Meeting Notes</span>
<span class="a" style="left:765.5px;top:769.01px;font-size:12.5px;color:#767676;letter-spacing:0.304px;">Dec 7, 2023 by Box-for-Netsuite</span>
<span class="a" style="left:1075px;top:769.01px;font-size:12.5px;color:#767676;letter-spacing:0.029px;">0 Files</span>
<span class="a" style="left:177px;top:819.01px;font-size:12.5px;color:#222;letter-spacing:0.444px;">Mutual NDA.pdf</span>
<span class="a" style="left:765.5px;top:819.01px;font-size:12.5px;color:#767676;letter-spacing:0.304px;">Dec 7, 2023 by Box-for-Netsuite</span>
<span class="a" style="left:1075px;top:819.01px;font-size:12.5px;color:#767676;letter-spacing:0.223px;">168.8 KB</span>
<span class="a" style="left:1315.5px;top:727.01px;font-size:11.9px;color:#fff;font-weight:700;letter-spacing:-0.188px;">BB</span>
<span class="a" style="left:1315.5px;top:773.01px;font-size:11.9px;color:#fff;font-weight:700;letter-spacing:-0.188px;">AA</span>
<span class="a" style="left:1347.6px;top:719.02px;font-size:12.3px;color:#222;letter-spacing:0.477px;">Box-for-Netsuite</span>
<span class="a" style="left:1347.6px;top:733.02px;font-size:12.3px;color:#767676;letter-spacing:0.545px;">Owner</span>
<span class="a" style="left:1347.6px;top:766.01px;font-size:12.3px;color:#222;letter-spacing:0.464px;">Administrator</span>
<span class="a" style="left:1347.6px;top:780.01px;font-size:12.3px;color:#767676;letter-spacing:0.384px;">Co-owner</span>
<span class="a" style="left:1347.6px;top:812.01px;font-size:12.3px;color:#222;letter-spacing:-0.324px;">Shared Link</span>
<span class="a" style="left:1347.6px;top:826.02px;font-size:12.3px;color:#0061d5;letter-spacing:-0.189px;">Create Link</span>
<span class="a" style="left:1347.6px;top:858.02px;font-size:12.3px;color:#222;letter-spacing:-0.241px;">File Request</span>
<span class="a" style="left:1347.6px;top:872.01px;font-size:12.3px;color:#0061d5;letter-spacing:-0.189px;">Create Link</span>
<span class="a" style="left:144.2px;top:821.00px;font-size:9.4px;color:#fff;font-weight:700;transform:scaleX(0.7787);transform-origin:0 0;-webkit-text-stroke:0.3px #fff;">PDF</span>
</div>
</body>
</html>
